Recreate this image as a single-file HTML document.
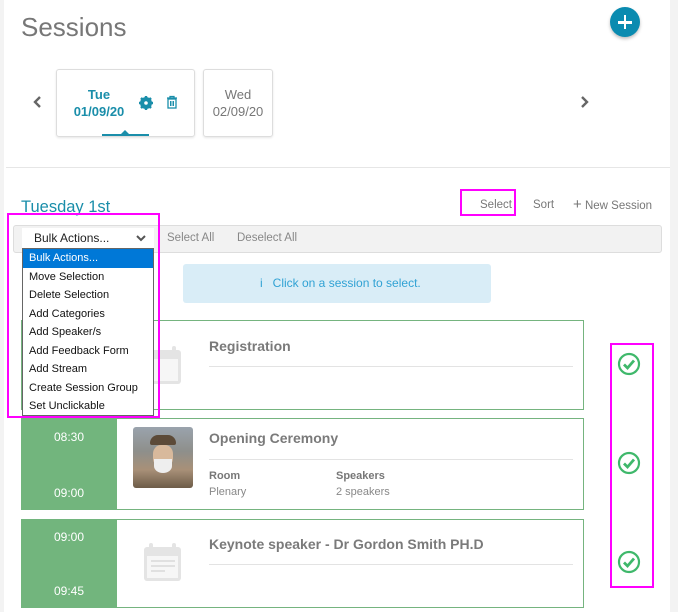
<!DOCTYPE html>
<html><head><meta charset="utf-8"><style>
*{box-sizing:border-box;margin:0;padding:0}
body{width:678px;height:612px;background:#f3f3f3;font-family:"Liberation Sans",sans-serif;position:relative;overflow:hidden}
.a{position:absolute}
.main{left:4px;top:0;width:666px;height:612px;background:#fff}
.card{border:1px solid #75b47f;background:#fff}
.time{background:#72b57d;color:#fff;font-size:12px;text-align:center}
.title{font-size:14px;font-weight:bold;color:#7a7a7a}
.sep{height:1px;background:#e3e3e3}
.dd div{height:18.5px;line-height:18.5px;padding-left:6px;font-size:11px;color:#111}
.chk{width:24px;height:24px}
</style></head><body>
<div class="a main"></div>
<div class="a" style="left:21px;top:12px;font-size:26px;color:#777">Sessions</div>
<div class="a" style="left:610px;top:7px;width:30px;height:30px;border-radius:50%;background:#0a8bb0;box-shadow:0 2px 3px rgba(0,0,0,.25)"></div>
<div class="a" style="left:618px;top:21px;width:14px;height:2.5px;background:#fff"></div>
<div class="a" style="left:623.7px;top:15px;width:2.5px;height:14px;background:#fff"></div>
<div class="a" style="left:6px;top:167px;width:664px;height:1px;background:#e6e6e6"></div>
<svg class="a" style="left:33px;top:96px" width="10" height="12"><path d="M7 1 L2 6 L7 11" stroke="#666" stroke-width="2.4" fill="none"/></svg>
<svg class="a" style="left:579px;top:96px" width="10" height="12"><path d="M3 1 L8 6 L3 11" stroke="#666" stroke-width="2.4" fill="none"/></svg>
<div class="a" style="left:56px;top:69px;width:139px;height:68px;border:1px solid #ddd;border-radius:3px;box-shadow:0 1px 2px rgba(0,0,0,.1)"></div>
<div class="a" style="left:58px;top:86px;width:82px;text-align:center;color:#1a8eaa;font-weight:bold;font-size:13px;line-height:17px">Tue<br>01/09/20</div>
<div class="a" style="left:102px;top:134px;width:47px;height:2px;background:#1a8eaa"></div>
<div class="a" style="left:121px;top:130px;width:0;height:0;border-left:4px solid transparent;border-right:4px solid transparent;border-bottom:4px solid #1a8eaa"></div>
<svg class="a" style="left:139px;top:96px" width="14" height="14" viewBox="0 0 14 14"><circle cx="7" cy="7" r="4.5" fill="none" stroke="#1a8eaa" stroke-width="3"/><g stroke="#1a8eaa" stroke-width="2.4"><path d="M7 0V14M0 7H14M2 2L12 12M12 2L2 12"/></g><circle cx="7" cy="7" r="1.8" fill="#fff"/></svg>
<svg class="a" style="left:166px;top:95px" width="12" height="14" viewBox="0 0 12 14"><path d="M1 3H11M4 3V1.5H8V3" stroke="#1a8eaa" stroke-width="1.3" fill="none"/><rect x="2" y="4" width="8" height="9" fill="none" stroke="#1a8eaa" stroke-width="1.3"/><path d="M4.5 6V11M6 6V11M7.5 6V11" stroke="#1a8eaa"/></svg>
<div class="a" style="left:203px;top:69px;width:70px;height:68px;border:1px solid #ddd;border-radius:3px;box-shadow:0 1px 2px rgba(0,0,0,.1);text-align:center;padding-top:16px;color:#777;font-size:13px;line-height:17px">Wed<br>02/09/20</div>
<div class="a" style="left:21px;top:198px;font-size:16.5px;color:#1a8eaa">Tuesday 1st</div>
<div class="a" style="left:460px;top:189px;width:56px;height:27px;border:2px solid #f0f"></div>
<div class="a" style="left:480px;top:199px;font-size:11.5px;color:#777">Select</div>
<div class="a" style="left:533px;top:199px;font-size:11.5px;color:#777">Sort</div>
<div class="a" style="left:573px;top:196px;font-size:11.5px;color:#777"><span style="font-size:15px">+</span> New Session</div>
<div class="a" style="left:13px;top:225px;width:649px;height:28px;background:#f2f2f2;border:1px solid #ddd;border-radius:3px"></div>
<div class="a" style="left:22px;top:228px;width:132px;height:21px;background:#fff;font-size:12px;color:#222;line-height:21px;padding-left:12px">Bulk Actions...</div>
<svg class="a" style="left:136px;top:235px" width="10" height="7"><path d="M1 1L5 5L9 1" stroke="#555" stroke-width="2" fill="none"/></svg>
<div class="a" style="left:167px;top:232px;font-size:11.5px;color:#888">Select All</div>
<div class="a" style="left:237px;top:232px;font-size:11.5px;color:#888">Deselect All</div>
<div class="a" style="left:183px;top:264px;width:308px;height:39px;background:#d9edf7;border-radius:3px;color:#31a2d4;font-size:12px;line-height:39px;padding-left:77px"><span style="margin-right:10px">i</span>Click on a session to select.</div>
<div class="a card" style="left:21px;top:320px;width:563px;height:90px"></div>
<div class="a card" style="left:21px;top:418px;width:563px;height:92px"></div>
<div class="a card" style="left:21px;top:519px;width:563px;height:89px"></div>
<div class="a time" style="left:21px;top:418px;width:96px;height:92px"><div style="padding-top:12px">08:30</div><div style="padding-top:42px">09:00</div></div>
<div class="a time" style="left:21px;top:519px;width:96px;height:89px"><div style="padding-top:11px">09:00</div><div style="padding-top:40px">09:45</div></div>
<svg class="a" style="left:143px;top:345px" width="40" height="40" viewBox="0 0 40 40"><rect x="1" y="5" width="37" height="34" rx="3" fill="#e4e4e4"/><rect x="4" y="14" width="31" height="22" fill="#f6f6f6"/><rect x="6" y="1" width="4" height="8" rx="2" fill="#e4e4e4"/><rect x="29" y="1" width="4" height="8" rx="2" fill="#e4e4e4"/></svg>
<svg class="a" style="left:143px;top:542px" width="40" height="40" viewBox="0 0 40 40"><rect x="1" y="5" width="37" height="34" rx="3" fill="#e4e4e4"/><rect x="4" y="14" width="31" height="22" fill="#f6f6f6"/><g fill="#e0e0e0"><rect x="8" y="18" width="24" height="2"/><rect x="8" y="23" width="24" height="2"/><rect x="8" y="28" width="14" height="2"/></g><rect x="6" y="1" width="4" height="8" rx="2" fill="#e4e4e4"/><rect x="29" y="1" width="4" height="8" rx="2" fill="#e4e4e4"/></svg>
<div class="a" style="left:133px;top:427px;width:60px;height:61px;border-radius:3px;background:linear-gradient(180deg,#9aa3ad 0%,#8e8f8b 40%,#a89078 70%,#6d5c48 100%)">
<div style="position:absolute;left:17px;top:8px;width:26px;height:10px;background:#5c4a38;border-radius:8px 8px 2px 2px"></div>
<div style="position:absolute;left:20px;top:18px;width:20px;height:22px;background:#d8b99c;border-radius:40%"></div>
<div style="position:absolute;left:21px;top:32px;width:18px;height:14px;background:#eee;border-radius:0 0 50% 50%"></div></div>
<div class="a title" style="left:209px;top:338px">Registration</div>
<div class="a title" style="left:209px;top:430px">Opening Ceremony</div>
<div class="a title" style="left:209px;top:536px">Keynote speaker - Dr Gordon Smith PH.D</div>
<div class="a sep" style="left:209px;top:366px;width:364px"></div>
<div class="a sep" style="left:209px;top:459px;width:364px"></div>
<div class="a sep" style="left:209px;top:564px;width:364px"></div>
<div class="a" style="left:209px;top:470px;font-size:11px;font-weight:bold;color:#777">Room</div>
<div class="a" style="left:209px;top:486px;font-size:11px;color:#888">Plenary</div>
<div class="a" style="left:336px;top:470px;font-size:11px;font-weight:bold;color:#777">Speakers</div>
<div class="a" style="left:336px;top:486px;font-size:11px;color:#888">2 speakers</div>
<div class="a" style="left:7px;top:213px;width:153px;height:205px;border:2px solid #f0f"></div>
<div class="a dd" style="left:22px;top:248px;width:132px;height:168px;background:#fff;border:1px solid #666">
<div style="background:#0078d7;color:#fff">Bulk Actions...</div><div>Move Selection</div><div>Delete Selection</div><div>Add Categories</div><div>Add Speaker/s</div><div>Add Feedback Form</div><div>Add Stream</div><div>Create Session Group</div><div>Set Unclickable</div></div>
<div class="a" style="left:610px;top:343px;width:44px;height:245px;border:2px solid #f0f"></div>
<svg class="a chk" style="left:617px;top:352px" viewBox="0 0 24 24"><circle cx="12" cy="12" r="10" fill="none" stroke="#3fb86b" stroke-width="2.2"/><path d="M7 12.5L10.5 16L17 8.5" stroke="#3fb86b" stroke-width="2.8" fill="none"/></svg>
<svg class="a chk" style="left:617px;top:451px" viewBox="0 0 24 24"><circle cx="12" cy="12" r="10" fill="none" stroke="#3fb86b" stroke-width="2.2"/><path d="M7 12.5L10.5 16L17 8.5" stroke="#3fb86b" stroke-width="2.8" fill="none"/></svg>
<svg class="a chk" style="left:617px;top:550px" viewBox="0 0 24 24"><circle cx="12" cy="12" r="10" fill="none" stroke="#3fb86b" stroke-width="2.2"/><path d="M7 12.5L10.5 16L17 8.5" stroke="#3fb86b" stroke-width="2.8" fill="none"/></svg>
</body></html>
